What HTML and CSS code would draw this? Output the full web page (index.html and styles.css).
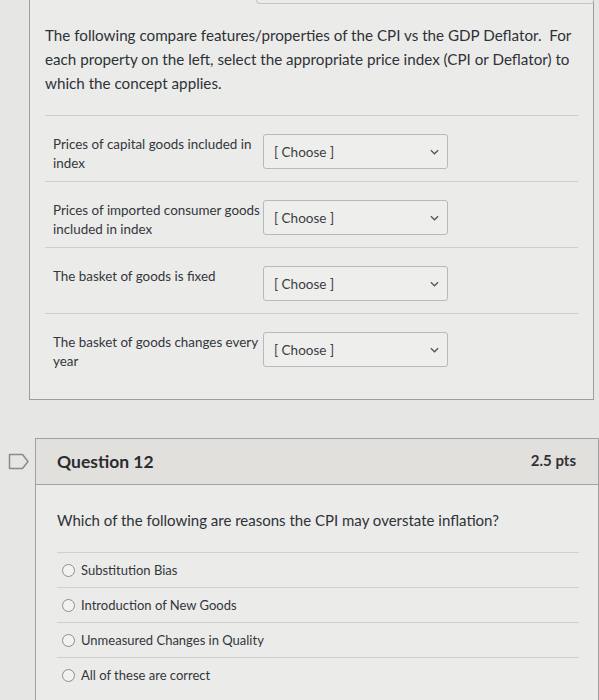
FILE: index.html
```html
<!DOCTYPE html>
<html>
<head>
<meta charset="utf-8">
<link rel="stylesheet" href="styles.css">
</head>
<body>
<div class="page">
  <div class="panel">
    <div class="top-edge-row"><div class="top-edge"></div></div>
    <p class="intro">The following compare features/properties of the CPI vs the GDP Deflator.&nbsp; For each property on the left, select the appropriate price index (CPI or Deflator) to which the concept applies.</p>
    <div class="rows">
      <div class="match-row">
        <div class="label">Prices of capital goods included in index</div>
        <div class="select"><span>[ Choose ]</span><svg class="chev" viewBox="0 0 10 6" width="9" height="6"><path d="M1 1l4 4 4-4" fill="none" stroke="#555" stroke-width="1.4"/></svg></div>
      </div>
      <div class="match-row">
        <div class="label">Prices of imported consumer goods included in index</div>
        <div class="select"><span>[ Choose ]</span><svg class="chev" viewBox="0 0 10 6" width="9" height="6"><path d="M1 1l4 4 4-4" fill="none" stroke="#555" stroke-width="1.4"/></svg></div>
      </div>
      <div class="match-row">
        <div class="label">The basket of goods is fixed</div>
        <div class="select"><span>[ Choose ]</span><svg class="chev" viewBox="0 0 10 6" width="9" height="6"><path d="M1 1l4 4 4-4" fill="none" stroke="#555" stroke-width="1.4"/></svg></div>
      </div>
      <div class="match-row last">
        <div class="label">The basket of goods changes every year</div>
        <div class="select"><span>[ Choose ]</span><svg class="chev" viewBox="0 0 10 6" width="9" height="6"><path d="M1 1l4 4 4-4" fill="none" stroke="#555" stroke-width="1.4"/></svg></div>
      </div>
    </div>
  </div>

  <div class="question">
    <div class="flag"><svg viewBox="0 0 22 17" width="22" height="17"><path d="M1.5 1.5h13l5.5 7-5.5 7h-13z" fill="none" stroke="#8a8a8a" stroke-width="1.5" stroke-linejoin="round"/></svg></div>
    <div class="qbox">
      <div class="qhead">
        <span class="qtitle">Question 12</span>
        <span class="qpts">2.5 pts</span>
      </div>
      <div class="qbody">
        <p class="qtext">Which of the following are reasons the CPI may overstate inflation?</p>
        <div class="answers">
          <div class="answer"><span class="radio"></span><span>Substitution Bias</span></div>
          <div class="answer"><span class="radio"></span><span>Introduction of New Goods</span></div>
          <div class="answer"><span class="radio"></span><span>Unmeasured Changes in Quality</span></div>
          <div class="answer"><span class="radio"></span><span>All of these are correct</span></div>
        </div>
      </div>
    </div>
  </div>
</div>
</body>
</html>
```

FILE: styles.css
```css
* { box-sizing: border-box; }
html, body { margin: 0; padding: 0; }
body {
  background: #e6e6e4;
  font-family: Lato, "Open Sans", sans-serif;
  color: #2f3438;
  width: 599px;
  height: 700px;
  overflow: hidden;
}
.page {
  padding-left: 29px;
}
.panel {
  width: 565px;
  background: #ebebea;
  border: 1px solid #9d9d9b;
  border-top: none;
  padding: 0 15px 28px 15px;
}
.top-edge-row {
  display: flex;
  justify-content: flex-end;
  margin-right: -16px;
}
.top-edge {
  width: 338px;
  height: 4px;
  border: 1px solid #c4c4c2;
  border-top: none;
  border-radius: 0 0 4px 4px;
}
.intro {
  margin: 19px 0 20px 0;
  font-size: 15.2px;
  line-height: 24px;
  color: #2e3236;
}
.match-row {
  display: flex;
  align-items: flex-start;
  height: 66px;
  padding: 18px 0 0 8px;
  border-top: 1px solid #cdcdcb;
}
.match-row.last {
  height: 58px;
}
.label {
  width: 210px;
  font-size: 13.4px;
  line-height: 19px;
  padding-top: 1px;
  color: #33373a;
}
.select {
  width: 185px;
  height: 35px;
  border: 1px solid #b9b9b7;
  border-radius: 3px;
  background: #eeeeed;
  display: flex;
  align-items: center;
  justify-content: space-between;
  padding: 0 8px 0 10px;
  font-size: 13.5px;
  color: #3a3e42;
}
.chev { display: block; }

.question {
  display: flex;
  align-items: flex-start;
  margin-top: 38px;
  margin-left: -21px;
}
.flag {
  width: 27px;
  padding: 15px 0 0 0;
}
.qbox {
  flex: 1;
  border: 1px solid #a1a19f;
  border-bottom: none;
  background: #ebebea;
}
.qhead {
  display: flex;
  justify-content: space-between;
  align-items: center;
  height: 46px;
  padding: 0 22px 0 21px;
  background: #e2e0dc;
  border-bottom: 1px solid #a3a3a1;
}
.qtitle {
  font-size: 17.5px;
  font-weight: 700;
  color: #2a2d30;
}
.qpts {
  font-size: 15px;
  font-weight: 700;
  color: #2f3236;
  margin-top: -4px;
}
.qbody {
  padding: 23px 19px 0 21px;
  height: 230px;
}
.qtext {
  margin: 0 0 20px 0;
  font-size: 15px;
  line-height: 24px;
  color: #2e3236;
}
.answer {
  display: flex;
  align-items: center;
  gap: 6px;
  height: 35px;
  padding-left: 5px;
  border-top: 1px solid #d0d0ce;
  font-size: 13px;
  color: #33373a;
}
.radio {
  width: 13px;
  height: 13px;
  border: 1px solid #8e8e8c;
  border-radius: 50%;
  background: #f2f2f1;
}
```
